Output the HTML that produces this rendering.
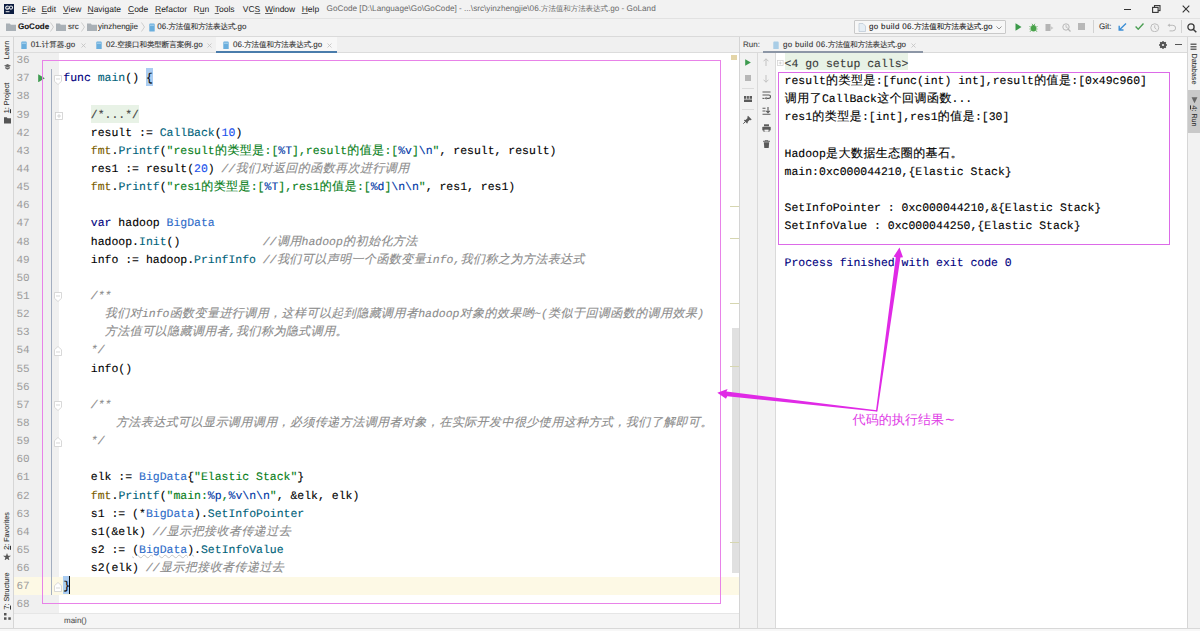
<!DOCTYPE html>
<html><head><meta charset="utf-8">
<style>
*{margin:0;padding:0;box-sizing:border-box}
html,body{text-rendering:geometricPrecision;width:1200px;height:631px;overflow:hidden;background:#f2f2f2;font-family:"Liberation Sans",sans-serif;position:relative}
.a{position:absolute}
i.k{position:relative;font-style:inherit;display:inline-block;width:12.45px;text-align:center;font-size:12px;line-height:1}
i.an{position:relative;font-style:normal;display:inline-block;width:13.1px;text-align:center;font-size:13px;line-height:1}
i.u{position:relative;font-style:normal;display:inline-block;width:7.45px;text-align:center;font-size:7.5px;line-height:1}
.menu{font-size:8.5px;color:#1e1e1e;top:3px;line-height:12px}
.menu u{text-decoration:underline;text-decoration-thickness:0.7px;text-decoration-color:#666;text-underline-offset:1.2px}
.ui{font-size:8px;line-height:12px;color:#333;-webkit-text-stroke:0.1px currentColor}
/* editor */
#ed{left:14px;top:53px;width:725px;height:560px;background:#fff;overflow:hidden}
#gut{left:0;top:0;width:44.5px;height:560px;background:#f0f0f0}
#nums{left:0;top:0;width:15.6px}
.nm{position:absolute;right:0;height:18.14px;line-height:18.14px;font-family:"Liberation Mono",monospace;font-size:11px;color:#9c9c9c;text-align:right;padding-right:0}
#code{left:49.3px;top:0;width:680px}
.ln{position:absolute;left:0;height:18.14px;line-height:18.14px;font-family:"Liberation Mono",monospace;font-size:11.47px;white-space:pre;color:#000;-webkit-text-stroke:0.12px currentColor}
.kw{color:#000080}
.fnd{color:#00627a}
.fn{color:#00627a}
.pk{color:#7a5d00}
.ty{color:#2d6bc9}
.tyw{color:#2d6bc9}
.wv{text-decoration:underline wavy #c4c4c4;text-decoration-thickness:0.8px;text-underline-offset:1px}
.st{color:#067d17}
.es{color:#0037a6}
.nu{color:#1750eb}
.cm{color:#8c8c8c;font-style:italic}
.fold{background:#e8f2e6;color:#444;padding:4px 0 1px}
.br{background:#abcdf2;padding:4px 0 1px}
.cur{background:#abcdf2;padding:4px 0 1px}
/* console */
#con{left:784.6px;top:55px;width:400px}
#con .ln{font-size:11.47px}
.cg{color:#3a3a3a;background:#e8f2e6;padding:4.5px 0 0.4px}
.co{color:#000}
.pf{color:#000080}
html:not(.hascjk) i.k,html:not(.hascjk) i.u,html:not(.hascjk) i.an{-webkit-text-fill-color:transparent;-webkit-text-stroke:0}
html:not(.hascjk) i.k::before{content:"";position:absolute;left:0;top:-1.9px;width:12.45px;height:14.00px}
html:not(.hascjk) i.k.g0::before{background:linear-gradient(currentColor,currentColor) 1.72px 1.00px/9.00px 1.00px no-repeat,linear-gradient(currentColor,currentColor) 1.72px 10.00px/9.00px 1.00px no-repeat,linear-gradient(currentColor,currentColor) 1.72px 1.00px/1.00px 10.00px no-repeat,linear-gradient(currentColor,currentColor) 9.72px 1.00px/1.00px 10.00px no-repeat,linear-gradient(currentColor,currentColor) 1.72px 5.50px/8.00px 1.00px no-repeat}
html:not(.hascjk) i.k.g1::before{background:linear-gradient(currentColor,currentColor) 3.22px 0.50px/1.00px 10.50px no-repeat,linear-gradient(currentColor,currentColor) 0.72px 4.00px/3.00px 1.00px no-repeat,linear-gradient(currentColor,currentColor) 5.22px 1.50px/6.00px 1.00px no-repeat,linear-gradient(currentColor,currentColor) 5.22px 1.50px/1.00px 9.00px no-repeat,linear-gradient(currentColor,currentColor) 10.22px 1.50px/1.00px 9.00px no-repeat,linear-gradient(currentColor,currentColor) 5.22px 6.00px/5.00px 1.00px no-repeat,linear-gradient(currentColor,currentColor) 5.22px 10.00px/6.00px 1.00px no-repeat}
html:not(.hascjk) i.k.g2::before{background:linear-gradient(currentColor,currentColor) 2.72px 1.00px/7.00px 1.00px no-repeat,linear-gradient(currentColor,currentColor) 2.72px 1.00px/1.00px 4.00px no-repeat,linear-gradient(currentColor,currentColor) 9.72px 1.00px/1.00px 4.00px no-repeat,linear-gradient(currentColor,currentColor) 2.72px 3.00px/7.00px 1.00px no-repeat,linear-gradient(currentColor,currentColor) 2.72px 5.00px/7.00px 1.00px no-repeat,linear-gradient(currentColor,currentColor) 0.72px 7.00px/11.00px 1.00px no-repeat,linear-gradient(currentColor,currentColor) 6.22px 7.00px/1.00px 4.00px no-repeat,linear-gradient(currentColor,currentColor) 6.22px 9.00px/4.00px 1.00px no-repeat,linear-gradient(currentColor,currentColor) 1.22px 10.50px/10.00px 1.00px no-repeat}
html:not(.hascjk) i.k.g3::before{background:linear-gradient(currentColor,currentColor) 5.72px 0.00px/1.00px 2.00px no-repeat,linear-gradient(currentColor,currentColor) 0.72px 2.50px/11.00px 1.00px no-repeat,linear-gradient(currentColor,currentColor) 4.22px 3.00px/1.00px 7.50px no-repeat,linear-gradient(currentColor,currentColor) 4.22px 5.50px/6.00px 1.00px no-repeat,linear-gradient(currentColor,currentColor) 9.72px 5.50px/1.00px 5.00px no-repeat,linear-gradient(currentColor,currentColor) 1.72px 10.00px/3.00px 1.00px no-repeat}
html:not(.hascjk) i.k.g4::before{background:linear-gradient(currentColor,currentColor) 1.22px 1.50px/3.00px 1.00px no-repeat,linear-gradient(currentColor,currentColor) 2.22px 4.00px/1.00px 6.00px no-repeat,linear-gradient(currentColor,currentColor) 1.22px 10.00px/3.00px 1.00px no-repeat,linear-gradient(currentColor,currentColor) 5.22px 1.00px/6.00px 1.00px no-repeat,linear-gradient(currentColor,currentColor) 5.22px 4.00px/6.00px 1.00px no-repeat,linear-gradient(currentColor,currentColor) 8.22px 1.00px/1.00px 10.00px no-repeat,linear-gradient(currentColor,currentColor) 5.22px 7.00px/6.00px 1.00px no-repeat}
html:not(.hascjk) i.k.g5::before{background:linear-gradient(currentColor,currentColor) 1.22px 1.50px/2.00px 1.00px no-repeat,linear-gradient(currentColor,currentColor) 1.22px 4.50px/2.00px 1.00px no-repeat,linear-gradient(currentColor,currentColor) 1.72px 7.00px/1.00px 3.00px no-repeat,linear-gradient(currentColor,currentColor) 4.72px 1.50px/6.50px 1.00px no-repeat,linear-gradient(currentColor,currentColor) 7.72px 1.50px/1.00px 9.00px no-repeat,linear-gradient(currentColor,currentColor) 4.72px 5.50px/6.50px 1.00px no-repeat,linear-gradient(currentColor,currentColor) 4.22px 10.00px/7.00px 1.00px no-repeat}
html:not(.hascjk) i.k.g6::before{background:linear-gradient(currentColor,currentColor) 0.72px 3.00px/11.00px 1.00px no-repeat,linear-gradient(currentColor,currentColor) 6.22px 0.50px/1.00px 10.50px no-repeat,linear-gradient(currentColor,currentColor) 2.22px 7.00px/3.00px 1.00px no-repeat,linear-gradient(currentColor,currentColor) 7.22px 7.00px/3.00px 1.00px no-repeat,linear-gradient(currentColor,currentColor) 3.22px 10.00px/6.00px 1.00px no-repeat}
html:not(.hascjk) i.k.g7::before{background:linear-gradient(currentColor,currentColor) 2.22px 1.00px/8.00px 1.00px no-repeat,linear-gradient(currentColor,currentColor) 2.22px 3.00px/8.00px 1.00px no-repeat,linear-gradient(currentColor,currentColor) 0.72px 5.00px/11.00px 1.00px no-repeat,linear-gradient(currentColor,currentColor) 2.22px 7.00px/8.00px 1.00px no-repeat,linear-gradient(currentColor,currentColor) 2.22px 9.00px/8.00px 1.00px no-repeat,linear-gradient(currentColor,currentColor) 6.22px 5.00px/1.00px 6.00px no-repeat,linear-gradient(currentColor,currentColor) 0.72px 10.50px/11.00px 1.00px no-repeat}
html:not(.hascjk) i.k.p0::before{background:linear-gradient(currentColor,currentColor) 2.22px 8.50px/1.00px 2.50px no-repeat}
html:not(.hascjk) i.k.p1::before{background:radial-gradient(circle at 3.22px 9.50px,transparent 0.90px,currentColor 1.10px,currentColor 1.90px,transparent 2.10px)}
html:not(.hascjk) i.k.p2::before{background:none}
html:not(.hascjk) i.u::before{content:"";position:absolute;left:0;top:0.0px;width:7.45px;height:9.20px}
html:not(.hascjk) i.u.g0::before{background:linear-gradient(currentColor,currentColor) 1.03px 0.60px/5.40px 0.80px no-repeat,linear-gradient(currentColor,currentColor) 1.03px 6.00px/5.40px 0.80px no-repeat,linear-gradient(currentColor,currentColor) 1.03px 0.60px/0.80px 6.00px no-repeat,linear-gradient(currentColor,currentColor) 5.83px 0.60px/0.80px 6.00px no-repeat,linear-gradient(currentColor,currentColor) 1.03px 3.30px/4.80px 0.80px no-repeat}
html:not(.hascjk) i.u.g1::before{background:linear-gradient(currentColor,currentColor) 1.93px 0.30px/0.80px 6.30px no-repeat,linear-gradient(currentColor,currentColor) 0.43px 2.40px/1.80px 0.80px no-repeat,linear-gradient(currentColor,currentColor) 3.13px 0.90px/3.60px 0.80px no-repeat,linear-gradient(currentColor,currentColor) 3.13px 0.90px/0.80px 5.40px no-repeat,linear-gradient(currentColor,currentColor) 6.12px 0.90px/0.80px 5.40px no-repeat,linear-gradient(currentColor,currentColor) 3.13px 3.60px/3.00px 0.80px no-repeat,linear-gradient(currentColor,currentColor) 3.13px 6.00px/3.60px 0.80px no-repeat}
html:not(.hascjk) i.u.g2::before{background:linear-gradient(currentColor,currentColor) 1.63px 0.60px/4.20px 0.80px no-repeat,linear-gradient(currentColor,currentColor) 1.63px 0.60px/0.80px 2.40px no-repeat,linear-gradient(currentColor,currentColor) 5.83px 0.60px/0.80px 2.40px no-repeat,linear-gradient(currentColor,currentColor) 1.63px 1.80px/4.20px 0.80px no-repeat,linear-gradient(currentColor,currentColor) 1.63px 3.00px/4.20px 0.80px no-repeat,linear-gradient(currentColor,currentColor) 0.43px 4.20px/6.60px 0.80px no-repeat,linear-gradient(currentColor,currentColor) 3.73px 4.20px/0.80px 2.40px no-repeat,linear-gradient(currentColor,currentColor) 3.73px 5.40px/2.40px 0.80px no-repeat,linear-gradient(currentColor,currentColor) 0.73px 6.30px/6.00px 0.80px no-repeat}
html:not(.hascjk) i.u.g3::before{background:linear-gradient(currentColor,currentColor) 3.43px 0.00px/0.80px 1.20px no-repeat,linear-gradient(currentColor,currentColor) 0.43px 1.50px/6.60px 0.80px no-repeat,linear-gradient(currentColor,currentColor) 2.53px 1.80px/0.80px 4.50px no-repeat,linear-gradient(currentColor,currentColor) 2.53px 3.30px/3.60px 0.80px no-repeat,linear-gradient(currentColor,currentColor) 5.83px 3.30px/0.80px 3.00px no-repeat,linear-gradient(currentColor,currentColor) 1.03px 6.00px/1.80px 0.80px no-repeat}
html:not(.hascjk) i.u.g4::before{background:linear-gradient(currentColor,currentColor) 0.73px 0.90px/1.80px 0.80px no-repeat,linear-gradient(currentColor,currentColor) 1.33px 2.40px/0.80px 3.60px no-repeat,linear-gradient(currentColor,currentColor) 0.73px 6.00px/1.80px 0.80px no-repeat,linear-gradient(currentColor,currentColor) 3.13px 0.60px/3.60px 0.80px no-repeat,linear-gradient(currentColor,currentColor) 3.13px 2.40px/3.60px 0.80px no-repeat,linear-gradient(currentColor,currentColor) 4.93px 0.60px/0.80px 6.00px no-repeat,linear-gradient(currentColor,currentColor) 3.13px 4.20px/3.60px 0.80px no-repeat}
html:not(.hascjk) i.u.g5::before{background:linear-gradient(currentColor,currentColor) 0.73px 0.90px/1.20px 0.80px no-repeat,linear-gradient(currentColor,currentColor) 0.73px 2.70px/1.20px 0.80px no-repeat,linear-gradient(currentColor,currentColor) 1.03px 4.20px/0.80px 1.80px no-repeat,linear-gradient(currentColor,currentColor) 2.83px 0.90px/3.90px 0.80px no-repeat,linear-gradient(currentColor,currentColor) 4.62px 0.90px/0.80px 5.40px no-repeat,linear-gradient(currentColor,currentColor) 2.83px 3.30px/3.90px 0.80px no-repeat,linear-gradient(currentColor,currentColor) 2.53px 6.00px/4.20px 0.80px no-repeat}
html:not(.hascjk) i.u.g6::before{background:linear-gradient(currentColor,currentColor) 0.43px 1.80px/6.60px 0.80px no-repeat,linear-gradient(currentColor,currentColor) 3.73px 0.30px/0.80px 6.30px no-repeat,linear-gradient(currentColor,currentColor) 1.33px 4.20px/1.80px 0.80px no-repeat,linear-gradient(currentColor,currentColor) 4.33px 4.20px/1.80px 0.80px no-repeat,linear-gradient(currentColor,currentColor) 1.93px 6.00px/3.60px 0.80px no-repeat}
html:not(.hascjk) i.u.g7::before{background:linear-gradient(currentColor,currentColor) 1.33px 0.60px/4.80px 0.80px no-repeat,linear-gradient(currentColor,currentColor) 1.33px 1.80px/4.80px 0.80px no-repeat,linear-gradient(currentColor,currentColor) 0.43px 3.00px/6.60px 0.80px no-repeat,linear-gradient(currentColor,currentColor) 1.33px 4.20px/4.80px 0.80px no-repeat,linear-gradient(currentColor,currentColor) 1.33px 5.40px/4.80px 0.80px no-repeat,linear-gradient(currentColor,currentColor) 3.73px 3.00px/0.80px 3.60px no-repeat,linear-gradient(currentColor,currentColor) 0.43px 6.30px/6.60px 0.80px no-repeat}
html:not(.hascjk) i.u.p0::before{background:linear-gradient(currentColor,currentColor) 1.33px 5.10px/0.80px 1.50px no-repeat}
html:not(.hascjk) i.u.p1::before{background:radial-gradient(circle at 1.93px 5.70px,transparent 0.26px,currentColor 0.46px,currentColor 1.26px,transparent 1.46px)}
html:not(.hascjk) i.u.p2::before{background:none}
html:not(.hascjk) i.an::before{content:"";position:absolute;left:0;top:-1.2px;width:13.1px;height:14.60px}
html:not(.hascjk) i.an.g0::before{background:linear-gradient(currentColor,currentColor) 1.82px 1.05px/9.45px 1.00px no-repeat,linear-gradient(currentColor,currentColor) 1.82px 10.50px/9.45px 1.00px no-repeat,linear-gradient(currentColor,currentColor) 1.82px 1.05px/1.00px 10.50px no-repeat,linear-gradient(currentColor,currentColor) 10.22px 1.05px/1.00px 10.50px no-repeat,linear-gradient(currentColor,currentColor) 1.82px 5.78px/8.40px 1.00px no-repeat}
html:not(.hascjk) i.an.g1::before{background:linear-gradient(currentColor,currentColor) 3.40px 0.53px/1.00px 11.03px no-repeat,linear-gradient(currentColor,currentColor) 0.77px 4.20px/3.15px 1.00px no-repeat,linear-gradient(currentColor,currentColor) 5.50px 1.58px/6.30px 1.00px no-repeat,linear-gradient(currentColor,currentColor) 5.50px 1.58px/1.00px 9.45px no-repeat,linear-gradient(currentColor,currentColor) 10.75px 1.58px/1.00px 9.45px no-repeat,linear-gradient(currentColor,currentColor) 5.50px 6.30px/5.25px 1.00px no-repeat,linear-gradient(currentColor,currentColor) 5.50px 10.50px/6.30px 1.00px no-repeat}
html:not(.hascjk) i.an.g2::before{background:linear-gradient(currentColor,currentColor) 2.87px 1.05px/7.35px 1.00px no-repeat,linear-gradient(currentColor,currentColor) 2.87px 1.05px/1.00px 4.20px no-repeat,linear-gradient(currentColor,currentColor) 10.22px 1.05px/1.00px 4.20px no-repeat,linear-gradient(currentColor,currentColor) 2.87px 3.15px/7.35px 1.00px no-repeat,linear-gradient(currentColor,currentColor) 2.87px 5.25px/7.35px 1.00px no-repeat,linear-gradient(currentColor,currentColor) 0.77px 7.35px/11.55px 1.00px no-repeat,linear-gradient(currentColor,currentColor) 6.55px 7.35px/1.00px 4.20px no-repeat,linear-gradient(currentColor,currentColor) 6.55px 9.45px/4.20px 1.00px no-repeat,linear-gradient(currentColor,currentColor) 1.30px 11.03px/10.50px 1.00px no-repeat}
html:not(.hascjk) i.an.g3::before{background:linear-gradient(currentColor,currentColor) 6.02px 0.00px/1.00px 2.10px no-repeat,linear-gradient(currentColor,currentColor) 0.77px 2.62px/11.55px 1.00px no-repeat,linear-gradient(currentColor,currentColor) 4.45px 3.15px/1.00px 7.88px no-repeat,linear-gradient(currentColor,currentColor) 4.45px 5.78px/6.30px 1.00px no-repeat,linear-gradient(currentColor,currentColor) 10.22px 5.78px/1.00px 5.25px no-repeat,linear-gradient(currentColor,currentColor) 1.82px 10.50px/3.15px 1.00px no-repeat}
html:not(.hascjk) i.an.g4::before{background:linear-gradient(currentColor,currentColor) 1.30px 1.58px/3.15px 1.00px no-repeat,linear-gradient(currentColor,currentColor) 2.35px 4.20px/1.00px 6.30px no-repeat,linear-gradient(currentColor,currentColor) 1.30px 10.50px/3.15px 1.00px no-repeat,linear-gradient(currentColor,currentColor) 5.50px 1.05px/6.30px 1.00px no-repeat,linear-gradient(currentColor,currentColor) 5.50px 4.20px/6.30px 1.00px no-repeat,linear-gradient(currentColor,currentColor) 8.65px 1.05px/1.00px 10.50px no-repeat,linear-gradient(currentColor,currentColor) 5.50px 7.35px/6.30px 1.00px no-repeat}
html:not(.hascjk) i.an.g5::before{background:linear-gradient(currentColor,currentColor) 1.30px 1.58px/2.10px 1.00px no-repeat,linear-gradient(currentColor,currentColor) 1.30px 4.73px/2.10px 1.00px no-repeat,linear-gradient(currentColor,currentColor) 1.82px 7.35px/1.00px 3.15px no-repeat,linear-gradient(currentColor,currentColor) 4.97px 1.58px/6.83px 1.00px no-repeat,linear-gradient(currentColor,currentColor) 8.12px 1.58px/1.00px 9.45px no-repeat,linear-gradient(currentColor,currentColor) 4.97px 5.78px/6.83px 1.00px no-repeat,linear-gradient(currentColor,currentColor) 4.45px 10.50px/7.35px 1.00px no-repeat}
html:not(.hascjk) i.an.g6::before{background:linear-gradient(currentColor,currentColor) 0.77px 3.15px/11.55px 1.00px no-repeat,linear-gradient(currentColor,currentColor) 6.55px 0.53px/1.00px 11.03px no-repeat,linear-gradient(currentColor,currentColor) 2.35px 7.35px/3.15px 1.00px no-repeat,linear-gradient(currentColor,currentColor) 7.60px 7.35px/3.15px 1.00px no-repeat,linear-gradient(currentColor,currentColor) 3.40px 10.50px/6.30px 1.00px no-repeat}
html:not(.hascjk) i.an.g7::before{background:linear-gradient(currentColor,currentColor) 2.35px 1.05px/8.40px 1.00px no-repeat,linear-gradient(currentColor,currentColor) 2.35px 3.15px/8.40px 1.00px no-repeat,linear-gradient(currentColor,currentColor) 0.77px 5.25px/11.55px 1.00px no-repeat,linear-gradient(currentColor,currentColor) 2.35px 7.35px/8.40px 1.00px no-repeat,linear-gradient(currentColor,currentColor) 2.35px 9.45px/8.40px 1.00px no-repeat,linear-gradient(currentColor,currentColor) 6.55px 5.25px/1.00px 6.30px no-repeat,linear-gradient(currentColor,currentColor) 0.77px 11.03px/11.55px 1.00px no-repeat}
html:not(.hascjk) i.an.p0::before{background:linear-gradient(currentColor,currentColor) 2.35px 8.93px/1.00px 2.62px no-repeat}
html:not(.hascjk) i.an.p1::before{background:radial-gradient(circle at 3.40px 9.97px,transparent 0.98px,currentColor 1.18px,currentColor 1.98px,transparent 2.18px)}
html:not(.hascjk) i.an.p2::before{background:none}
html:not(.hascjk) .cm i.k::before{transform:skewX(-10deg)}
</style>
<script>
(function(){try{var c=document.createElement('canvas');c.width=40;c.height=24;var x=c.getContext('2d');
x.font='18px "Liberation Sans", sans-serif';
function d(s){x.clearRect(0,0,40,24);x.fillText(s,2,19);return Array.prototype.join.call(x.getImageData(0,0,40,24).data,'');}
if(d('\u6211')!==d('\u4eec')) document.documentElement.className='hascjk';}catch(e){}})();
</script></head><body>

<!-- menu bar -->
<div class="a" style="left:0;top:0;width:1200px;height:18.5px;background:#f2f2f2;border-bottom:1.5px solid #e2e2e2"></div>
<svg class="a" style="left:4px;top:3.8px" width="10.2" height="10" viewBox="0 0 10.2 10"><rect width="10.2" height="10" fill="#0c1c40"/><path d="M4.6 2.6A1.65 1.65 0 1 0 4.8 4.4H3.4" fill="none" stroke="#e8e8e8" stroke-width="1.1"/><circle cx="7" cy="3.6" r="1.6" fill="none" stroke="#e8e8e8" stroke-width="1.1"/><rect x="1.7" y="7.2" width="3.8" height="1" fill="#e8e8e8"/></svg>
<div class="a menu" style="left:22px"><u>F</u>ile</div>
<div class="a menu" style="left:41.4px"><u>E</u>dit</div>
<div class="a menu" style="left:63px"><u>V</u>iew</div>
<div class="a menu" style="left:87.5px"><u>N</u>avigate</div>
<div class="a menu" style="left:128px"><u>C</u>ode</div>
<div class="a menu" style="left:155px"><u>R</u>efactor</div>
<div class="a menu" style="left:193.5px">R<u>u</u>n</div>
<div class="a menu" style="left:214.7px"><u>T</u>ools</div>
<div class="a menu" style="left:242.8px">VC<u>S</u></div>
<div class="a menu" style="left:265px"><u>W</u>indow</div>
<div class="a menu" style="left:301.7px"><u>H</u>elp</div>
<div class="a menu" style="left:326.6px;color:#6a6a6a;font-size:8.2px">GoCode [D:\Language\Go\GoCode] - ...\src\yinzhengjie\06.<i class="u g7">方</i><i class="u g3">法</i><i class="u g4">值</i><i class="u g4">和</i><i class="u g7">方</i><i class="u g3">法</i><i class="u g0">表</i><i class="u g2">达</i><i class="u g1">式</i>.go - GoLand</div>
<div class="a" style="left:1124px;top:8.5px;width:6.5px;height:1.2px;background:#333"></div>
<svg class="a" style="left:1152px;top:5px" width="9" height="8" viewBox="0 0 9 8"><rect x="2.5" y="0.6" width="5.5" height="5" fill="none" stroke="#333" stroke-width="1.1"/><rect x="0.6" y="2.4" width="5.5" height="5" fill="#f2f2f2" stroke="#333" stroke-width="1.1"/></svg>
<svg class="a" style="left:1182px;top:5px" width="8" height="8" viewBox="0 0 8 8"><path d="M0.7 0.7L7.3 7.3M7.3 0.7L0.7 7.3" stroke="#333" stroke-width="1.1"/></svg>

<!-- nav bar -->
<div class="a" style="left:0;top:18.5px;width:1200px;height:18.5px;background:#f2f2f2;border-bottom:1.5px solid #dadada"></div>

<!-- breadcrumbs -->
<svg class="a" style="left:6px;top:22.5px" width="10" height="8" viewBox="0 0 10 8"><path d="M0 0.5h3.8l1 1.2H10V8H0z" fill="#a9b0b6"/></svg>
<div class="a ui" style="left:18px;top:20.5px;font-weight:bold;color:#111">GoCode</div>
<svg class="a" style="left:49.5px;top:22px" width="4" height="10" viewBox="0 0 4 10"><path d="M0.5 0.5L3.5 5L0.5 9.5" fill="none" stroke="#c4c4c4" stroke-width="0.8"/></svg>
<svg class="a" style="left:56px;top:22.5px" width="10" height="8" viewBox="0 0 10 8"><path d="M0 0.5h3.8l1 1.2H10V8H0z" fill="#a9b0b6"/></svg>
<div class="a ui" style="left:68px;top:20.5px">src</div>
<svg class="a" style="left:80.5px;top:22px" width="4" height="10" viewBox="0 0 4 10"><path d="M0.5 0.5L3.5 5L0.5 9.5" fill="none" stroke="#c4c4c4" stroke-width="0.8"/></svg>
<svg class="a" style="left:87px;top:22.5px" width="10" height="8" viewBox="0 0 10 8"><path d="M0 0.5h3.8l1 1.2H10V8H0z" fill="#a9b0b6"/></svg>
<div class="a ui" style="left:98px;top:20.5px">yinzhengjie</div>
<svg class="a" style="left:141px;top:22px" width="4" height="10" viewBox="0 0 4 10"><path d="M0.5 0.5L3.5 5L0.5 9.5" fill="none" stroke="#c4c4c4" stroke-width="0.8"/></svg>
<svg class="a" style="left:148.7px;top:23.0px" width="6" height="8.5" viewBox="0 0 6 8.5"><path d="M1.2 0.6h3.6a0.9 0.9 0 0 1 0.9 0.9V8a0.5 0.5 0 0 1-0.5 0.5H0.8A0.5 0.5 0 0 1 0.3 8V1.5a0.9 0.9 0 0 1 0.9-0.9z" fill="#6aaedd"/><circle cx="2" cy="2.2" r="0.6" fill="#e8f4fb"/><circle cx="4" cy="2.2" r="0.6" fill="#e8f4fb"/></svg>
<div class="a ui" style="left:157.3px;top:20.5px">06.<i class="u g7">方</i><i class="u g3">法</i><i class="u g4">值</i><i class="u g4">和</i><i class="u g7">方</i><i class="u g3">法</i><i class="u g0">表</i><i class="u g2">达</i><i class="u g1">式</i>.go</div>

<!-- run config combo -->
<div class="a" style="left:853.5px;top:20px;width:152.5px;height:14px;background:#f7f7f7;border:1px solid #c9c9c9;border-radius:1px"></div>
<svg class="a" style="left:858px;top:23px" width="8" height="9" viewBox="0 0 8 9"><path d="M1 0.5h4l2.5 2.5V8.5H1z" fill="#e6eef5" stroke="#b9c6d2" stroke-width="0.7"/></svg>
<div class="a ui" style="left:869px;top:21px;color:#222"><span style="letter-spacing:0.33px">go build 06.</span><i class="u g7">方</i><i class="u g3">法</i><i class="u g4">值</i><i class="u g4">和</i><i class="u g7">方</i><i class="u g3">法</i><i class="u g0">表</i><i class="u g2">达</i><i class="u g1">式</i>.go</div>
<svg class="a" style="left:995.5px;top:25.5px" width="6" height="4" viewBox="0 0 6 4"><path d="M0.5 0.5L3 3L5.5 0.5" fill="none" stroke="#777" stroke-width="0.8"/></svg>
<svg class="a" style="left:1015px;top:23px" width="7" height="8" viewBox="0 0 7 8"><path d="M0.5 0.3L6.5 4L0.5 7.7z" fill="#3c9a4a"/></svg>
<svg class="a" style="left:1029px;top:22.5px" width="9" height="9" viewBox="0 0 9 9"><ellipse cx="4.5" cy="5.2" rx="2.6" ry="3.2" fill="#49a34a"/><path d="M0.5 3.5l2 1M8.5 3.5l-2 1M0.5 6l2 0M8.5 6l-2 0M0.8 8.5l2-1.2M8.2 8.5l-2-1.2M3 0.8l1 1.3M6 0.8l-1 1.3" stroke="#49a34a" stroke-width="0.8"/></svg>
<svg class="a" style="left:1045px;top:22.5px" width="9" height="9" viewBox="0 0 9 9"><path d="M0.5 1h5v7h-5z" fill="#b5b5b5"/><path d="M5.5 3L8.5 5L5.5 7" fill="#c9c9c9"/></svg>
<svg class="a" style="left:1062px;top:22.5px" width="9" height="9" viewBox="0 0 9 9"><circle cx="4" cy="4" r="3.2" fill="none" stroke="#b8b8b8" stroke-width="1"/><path d="M4 2v2.3h1.6" stroke="#b8b8b8" stroke-width="0.8" fill="none"/><path d="M5.5 5.5L8.5 8.5" stroke="#b8b8b8" stroke-width="1.2"/></svg>
<div class="a" style="left:1078px;top:23px;width:7px;height:7px;background:#b8b8b8"></div>
<div class="a" style="left:1092.5px;top:20px;width:1px;height:13px;background:#d2d2d2"></div>
<div class="a ui" style="left:1099px;top:21px;color:#333">Git:</div>
<svg class="a" style="left:1118px;top:23px" width="9" height="8" viewBox="0 0 9 8"><path d="M8 0.6L1.5 6.8M1.2 2.8V7h4.3" fill="none" stroke="#3d8fd6" stroke-width="1.4"/></svg>
<svg class="a" style="left:1134.5px;top:23px" width="9" height="7" viewBox="0 0 9 7"><path d="M0.6 3.6L3.2 6.2L8.5 0.6" fill="none" stroke="#4a9e52" stroke-width="1.4"/></svg>
<svg class="a" style="left:1150px;top:22.5px" width="9.5" height="9.5" viewBox="0 0 10 10"><circle cx="5" cy="5" r="4.2" fill="none" stroke="#b9b9b9" stroke-width="1"/><path d="M5 2.5V5.2l1.8 1.4" stroke="#b9b9b9" stroke-width="0.9" fill="none"/></svg>
<svg class="a" style="left:1167px;top:22.5px" width="9" height="9" viewBox="0 0 9 9"><path d="M2 2.3h3.8a2.8 2.8 0 0 1 0 5.6H2.5" fill="none" stroke="#b9b9b9" stroke-width="1"/><path d="M0.5 2.3L2.8 0.5V4.1z" fill="#b9b9b9"/></svg>
<div class="a" style="left:1181px;top:20px;width:1px;height:13px;background:#d2d2d2"></div>
<svg class="a" style="left:1187px;top:22.5px" width="10" height="10" viewBox="0 0 10 10"><circle cx="4" cy="4" r="3.1" fill="none" stroke="#3a3a3a" stroke-width="1.3"/><path d="M6.2 6.2L9.3 9.3" stroke="#3a3a3a" stroke-width="1.5"/></svg>

<!-- left strip -->
<div class="a" style="left:0;top:37px;width:13.5px;height:591px;background:#f2f2f2;border-right:1px solid #d6d6d6"></div>
<!-- right strip -->
<div class="a" style="left:1187px;top:37px;width:13px;height:591px;background:#f2f2f2;border-left:1px solid #d6d6d6"></div>


<!-- left strip labels -->
<div class="a ui" style="left:-23px;top:44.3px;width:60px;height:12px;transform:rotate(-90deg);text-align:center;color:#333;font-size:7.2px;white-space:nowrap">Learn</div>
<svg class="a" style="left:3.5px;top:63.5px" width="7" height="6" viewBox="0 0 7 6"><path d="M3.5 0L7 1.8L3.5 3.6L0 1.8z" fill="#666"/><path d="M1.3 2.7v1.8L3.5 5.7L5.7 4.5V2.7L3.5 3.9z" fill="#666"/></svg>
<div class="a ui" style="left:-23px;top:91.5px;width:60px;height:12px;transform:rotate(-90deg);text-align:center;color:#333;font-size:7.2px;white-space:nowrap"><u>1</u>: Project</div>
<svg class="a" style="left:3.5px;top:117px" width="7" height="6.5" viewBox="0 0 7 6.5"><path d="M0 0.3h2.8l0.7 0.9H7V6.5H0z" fill="#555"/></svg>
<div class="a ui" style="left:-23px;top:524.6px;width:60px;height:12px;transform:rotate(-90deg);text-align:center;color:#333;font-size:7.2px;white-space:nowrap"><u>2</u>: Favorites</div>
<svg class="a" style="left:3px;top:552.5px" width="8" height="7.5" viewBox="0 0 8 7.5"><path d="M4 0L5 2.7L8 2.8L5.6 4.6L6.5 7.5L4 5.8L1.5 7.5L2.4 4.6L0 2.8L3 2.7z" fill="#555"/></svg>
<div class="a ui" style="left:-23px;top:584.8px;width:60px;height:12px;transform:rotate(-90deg);text-align:center;color:#333;font-size:7.2px;white-space:nowrap"><u>7</u>: Structure</div>
<svg class="a" style="left:3.5px;top:613px" width="7" height="7" viewBox="0 0 7 7"><rect x="0" y="0" width="2.5" height="2.5" fill="#555"/><rect x="0" y="4.3" width="2.5" height="2.5" fill="#555"/><rect x="4.3" y="4.3" width="2.5" height="2.5" fill="#555"/></svg>

<!-- right strip labels -->
<svg class="a" style="left:1190px;top:43px" width="7" height="7.5" viewBox="0 0 7 7.5"><path d="M0.5 1.2h6M0.5 3.7h6M0.5 6.2h6" stroke="#666" stroke-width="1.5"/></svg>
<div class="a ui" style="left:1164px;top:62.5px;width:60px;height:12px;transform:rotate(90deg);text-align:center;color:#333;font-size:7.2px;white-space:nowrap">Database</div>
<div class="a" style="left:1188px;top:90px;width:12px;height:42.5px;background:#c9c9c9"></div>
<svg class="a" style="left:1190.5px;top:97px" width="7" height="6.5" viewBox="0 0 7 6.5"><path d="M0.5 0.3L6.5 3.25L0.5 6.2z" transform="rotate(90 3.5 3.25)" fill="#666"/></svg>
<div class="a ui" style="left:1164px;top:109.9px;width:60px;height:12px;transform:rotate(90deg);text-align:center;color:#333;font-size:7.2px;white-space:nowrap"><u>4</u>: Run</div>

<!-- tab bar -->
<div class="a" style="left:14px;top:37px;width:725px;height:16px;background:#f0f0f0;border-bottom:1px solid #dcdcdc"></div>

<!-- tabs -->
<svg class="a" style="left:20.5px;top:40.5px" width="6" height="8.5" viewBox="0 0 6 8.5"><path d="M1.2 0.6h3.6a0.9 0.9 0 0 1 0.9 0.9V8a0.5 0.5 0 0 1-0.5 0.5H0.8A0.5 0.5 0 0 1 0.3 8V1.5a0.9 0.9 0 0 1 0.9-0.9z" fill="#6aaedd"/><circle cx="2" cy="2.2" r="0.6" fill="#e8f4fb"/><circle cx="4" cy="2.2" r="0.6" fill="#e8f4fb"/></svg>
<div class="a ui" style="left:30.7px;top:39.2px">01.<i class="u g7">计</i><i class="u g1">算</i><i class="u g0">器</i>.go</div>
<svg class="a" style="left:80.5px;top:42.5px" width="5" height="5" viewBox="0 0 5 5"><path d="M0.5 0.5L4.5 4.5M4.5 0.5L0.5 4.5" stroke="#c0c0c0" stroke-width="0.8"/></svg>
<svg class="a" style="left:95.8px;top:40.5px" width="6" height="8.5" viewBox="0 0 6 8.5"><path d="M1.2 0.6h3.6a0.9 0.9 0 0 1 0.9 0.9V8a0.5 0.5 0 0 1-0.5 0.5H0.8A0.5 0.5 0 0 1 0.3 8V1.5a0.9 0.9 0 0 1 0.9-0.9z" fill="#6aaedd"/><circle cx="2" cy="2.2" r="0.6" fill="#e8f4fb"/><circle cx="4" cy="2.2" r="0.6" fill="#e8f4fb"/></svg>
<div class="a ui" style="left:106px;top:39.2px">02.<i class="u g6">空</i><i class="u g3">接</i><i class="u g5">口</i><i class="u g4">和</i><i class="u g5">类</i><i class="u g5">型</i><i class="u g3">断</i><i class="u g0">言</i><i class="u g0">案</i><i class="u g5">例</i>.go</div>
<svg class="a" style="left:207px;top:42.5px" width="5" height="5" viewBox="0 0 5 5"><path d="M0.5 0.5L4.5 4.5M4.5 0.5L0.5 4.5" stroke="#c0c0c0" stroke-width="0.8"/></svg>
<div class="a" style="left:216px;top:37px;width:121px;height:15px;background:#f7f7f7"></div>
<div class="a" style="left:216px;top:51.3px;width:121px;height:2px;background:#4a7cab"></div>
<svg class="a" style="left:223.0px;top:40.5px" width="6" height="8.5" viewBox="0 0 6 8.5"><path d="M1.2 0.6h3.6a0.9 0.9 0 0 1 0.9 0.9V8a0.5 0.5 0 0 1-0.5 0.5H0.8A0.5 0.5 0 0 1 0.3 8V1.5a0.9 0.9 0 0 1 0.9-0.9z" fill="#6aaedd"/><circle cx="2" cy="2.2" r="0.6" fill="#e8f4fb"/><circle cx="4" cy="2.2" r="0.6" fill="#e8f4fb"/></svg>
<div class="a ui" style="left:233px;top:39.2px">06.<i class="u g7">方</i><i class="u g3">法</i><i class="u g4">值</i><i class="u g4">和</i><i class="u g7">方</i><i class="u g3">法</i><i class="u g0">表</i><i class="u g2">达</i><i class="u g1">式</i>.go</div>
<svg class="a" style="left:327px;top:42.5px" width="5" height="5" viewBox="0 0 5 5"><path d="M0.5 0.5L4.5 4.5M4.5 0.5L0.5 4.5" stroke="#c0c0c0" stroke-width="0.8"/></svg>


<!-- editor -->
<div id="ed" class="a">
  <div id="gut" class="a"></div>
  <div class="a" style="left:0;top:523.7px;width:725px;height:18.14px;background:#fdf9e5"></div>
  <div id="nums" class="a">
<div class="nm" style="top:-0.85px">36</div>
<div class="nm" style="top:17.29px">37</div>
<div class="nm" style="top:35.43px">38</div>
<div class="nm" style="top:53.57px">39</div>
<div class="nm" style="top:71.71px">42</div>
<div class="nm" style="top:89.85px">43</div>
<div class="nm" style="top:107.99px">44</div>
<div class="nm" style="top:126.13px">45</div>
<div class="nm" style="top:144.27px">46</div>
<div class="nm" style="top:162.41px">47</div>
<div class="nm" style="top:180.55px">48</div>
<div class="nm" style="top:198.69px">49</div>
<div class="nm" style="top:216.83px">50</div>
<div class="nm" style="top:234.97px">51</div>
<div class="nm" style="top:253.11px">52</div>
<div class="nm" style="top:271.25px">53</div>
<div class="nm" style="top:289.39px">54</div>
<div class="nm" style="top:307.53px">55</div>
<div class="nm" style="top:325.67px">56</div>
<div class="nm" style="top:343.81px">57</div>
<div class="nm" style="top:361.95px">58</div>
<div class="nm" style="top:380.09px">59</div>
<div class="nm" style="top:398.23px">60</div>
<div class="nm" style="top:416.37px">61</div>
<div class="nm" style="top:434.51px">62</div>
<div class="nm" style="top:452.65px">63</div>
<div class="nm" style="top:470.79px">64</div>
<div class="nm" style="top:488.93px">65</div>
<div class="nm" style="top:507.07px">66</div>
<div class="nm" style="top:525.21px">67</div>
<div class="nm" style="top:543.35px">68</div>
  </div>
  <div id="code" class="a">
<div class="ln" style="top:-0.85px"></div>
<div class="ln" style="top:17.29px"><span class="kw">func</span><span class="n"> </span><span class="fnd">main</span><span class="n">() </span><span class="br">{</span></div>
<div class="ln" style="top:35.43px"></div>
<div class="ln" style="top:53.57px"><span class="n">    </span><span class="fold">/*...*/</span></div>
<div class="ln" style="top:71.71px"><span class="n">    result := </span><span class="fn">CallBack</span><span class="n">(</span><span class="nu">10</span><span class="n">)</span></div>
<div class="ln" style="top:89.85px"><span class="n">    </span><span class="pk">fmt</span><span class="n">.</span><span class="fn">Printf</span><span class="n">(</span><span class="st">&quot;result<i class="k g4">的</i><i class="k g5">类</i><i class="k g5">型</i><i class="k g1">是</i>:[</span><span class="es">%T</span><span class="st">],result<i class="k g4">的</i><i class="k g4">值</i><i class="k g1">是</i>:[</span><span class="es">%v</span><span class="st">]</span><span class="es">\n</span><span class="st">&quot;</span><span class="n">, result, result)</span></div>
<div class="ln" style="top:107.99px"><span class="n">    res1 := result(</span><span class="nu">20</span><span class="n">) </span><span class="cm">//<i class="k g7">我</i><i class="k g4">们</i><i class="k g7">对</i><i class="k g4">返</i><i class="k g2">回</i><i class="k g4">的</i><i class="k g3">函</i><i class="k g0">数</i><i class="k g3">再</i><i class="k g7">次</i><i class="k g5">进</i><i class="k g4">行</i><i class="k g5">调</i><i class="k g0">用</i></span></div>
<div class="ln" style="top:126.13px"><span class="n">    </span><span class="pk">fmt</span><span class="n">.</span><span class="fn">Printf</span><span class="n">(</span><span class="st">&quot;res1<i class="k g4">的</i><i class="k g5">类</i><i class="k g5">型</i><i class="k g1">是</i>:[</span><span class="es">%T</span><span class="st">],res1<i class="k g4">的</i><i class="k g4">值</i><i class="k g1">是</i>:[</span><span class="es">%d</span><span class="st">]</span><span class="es">\n\n</span><span class="st">&quot;</span><span class="n">, res1, res1)</span></div>
<div class="ln" style="top:144.27px"></div>
<div class="ln" style="top:162.41px"><span class="n">    </span><span class="kw">var</span><span class="n"> hadoop </span><span class="ty">BigData</span></div>
<div class="ln" style="top:180.55px"><span class="n">    hadoop.</span><span class="fn">Init</span><span class="n">()            </span><span class="cm">//<i class="k g5">调</i><i class="k g0">用</i>hadoop<i class="k g4">的</i><i class="k g3">初</i><i class="k g5">始</i><i class="k g2">化</i><i class="k g7">方</i><i class="k g3">法</i></span></div>
<div class="ln" style="top:198.69px"><span class="n">    info := hadoop.</span><span class="fn">PrinfInfo</span><span class="n"> </span><span class="cm">//<i class="k g7">我</i><i class="k g4">们</i><i class="k g1">可</i><i class="k g3">以</i><i class="k g0">声</i><i class="k g2">明</i><i class="k g0">一</i><i class="k g6">个</i><i class="k g3">函</i><i class="k g0">数</i><i class="k g0">变</i><i class="k g1">量</i>info,<i class="k g7">我</i><i class="k g4">们</i><i class="k g0">称</i><i class="k g5">之</i><i class="k g6">为</i><i class="k g7">方</i><i class="k g3">法</i><i class="k g0">表</i><i class="k g2">达</i><i class="k g1">式</i></span></div>
<div class="ln" style="top:216.83px"></div>
<div class="ln" style="top:234.97px"><span class="n">    </span><span class="cm">/**</span></div>
<div class="ln" style="top:253.11px"><span class="n">    </span><span class="cm">  <i class="k g7">我</i><i class="k g4">们</i><i class="k g7">对</i>info<i class="k g3">函</i><i class="k g0">数</i><i class="k g0">变</i><i class="k g1">量</i><i class="k g5">进</i><i class="k g4">行</i><i class="k g5">调</i><i class="k g0">用</i><i class="k p0">，</i><i class="k g7">这</i><i class="k g1">样</i><i class="k g1">可</i><i class="k g3">以</i><i class="k g1">起</i><i class="k g0">到</i><i class="k g0">隐</i><i class="k g1">藏</i><i class="k g5">调</i><i class="k g0">用</i><i class="k g3">者</i>hadoop<i class="k g7">对</i><i class="k g7">象</i><i class="k g4">的</i><i class="k g0">效</i><i class="k g4">果</i><i class="k g1">哟</i>~(<i class="k g5">类</i><i class="k g4">似</i><i class="k g2">于</i><i class="k g2">回</i><i class="k g5">调</i><i class="k g3">函</i><i class="k g0">数</i><i class="k g4">的</i><i class="k g5">调</i><i class="k g0">用</i><i class="k g0">效</i><i class="k g4">果</i>)</span></div>
<div class="ln" style="top:271.25px"><span class="n">    </span><span class="cm">  <i class="k g7">方</i><i class="k g3">法</i><i class="k g4">值</i><i class="k g1">可</i><i class="k g3">以</i><i class="k g0">隐</i><i class="k g1">藏</i><i class="k g5">调</i><i class="k g0">用</i><i class="k g3">者</i>,<i class="k g7">我</i><i class="k g4">们</i><i class="k g0">称</i><i class="k g6">为</i><i class="k g0">隐</i><i class="k g1">式</i><i class="k g5">调</i><i class="k g0">用</i><i class="k p1">。</i></span></div>
<div class="ln" style="top:289.39px"><span class="n">    </span><span class="cm">*/</span></div>
<div class="ln" style="top:307.53px"><span class="n">    info()</span></div>
<div class="ln" style="top:325.67px"></div>
<div class="ln" style="top:343.81px"><span class="n">    </span><span class="cm">/**</span></div>
<div class="ln" style="top:361.95px"><span class="n">    </span><span class="cm"><i class="k p2">　</i><i class="k p2">　</i><i class="k g7">方</i><i class="k g3">法</i><i class="k g0">表</i><i class="k g2">达</i><i class="k g1">式</i><i class="k g1">可</i><i class="k g3">以</i><i class="k g2">显</i><i class="k g6">示</i><i class="k g5">调</i><i class="k g0">用</i><i class="k g5">调</i><i class="k g0">用</i><i class="k p0">，</i><i class="k g3">必</i><i class="k g5">须</i><i class="k g0">传</i><i class="k g6">递</i><i class="k g7">方</i><i class="k g3">法</i><i class="k g5">调</i><i class="k g0">用</i><i class="k g3">者</i><i class="k g7">对</i><i class="k g7">象</i><i class="k p0">，</i><i class="k g0">在</i><i class="k g2">实</i><i class="k g3">际</i><i class="k g0">开</i><i class="k g7">发</i><i class="k g3">中</i><i class="k g0">很</i><i class="k g7">少</i><i class="k g1">使</i><i class="k g0">用</i><i class="k g7">这</i><i class="k g3">种</i><i class="k g7">方</i><i class="k g1">式</i><i class="k p0">，</i><i class="k g7">我</i><i class="k g4">们</i><i class="k g2">了</i><i class="k g5">解</i><i class="k g5">即</i><i class="k g1">可</i><i class="k p1">。</i></span></div>
<div class="ln" style="top:380.09px"><span class="n">    </span><span class="cm">*/</span></div>
<div class="ln" style="top:398.23px"></div>
<div class="ln" style="top:416.37px"><span class="n">    elk := </span><span class="ty">BigData</span><span class="n">{</span><span class="st">&quot;Elastic Stack&quot;</span><span class="n">}</span></div>
<div class="ln" style="top:434.51px"><span class="n">    </span><span class="pk">fmt</span><span class="n">.</span><span class="fn">Printf</span><span class="n">(</span><span class="st">&quot;main:</span><span class="es">%p</span><span class="st">,</span><span class="es">%v\n\n</span><span class="st">&quot;</span><span class="n">, &amp;elk, elk)</span></div>
<div class="ln" style="top:452.65px"><span class="n">    s1 := (*</span><span class="ty">BigData</span><span class="n">).</span><span class="fn">SetInfoPointer</span></div>
<div class="ln" style="top:470.79px"><span class="n">    s1(&amp;elk) </span><span class="cm">//<i class="k g2">显</i><i class="k g6">示</i><i class="k g6">把</i><i class="k g3">接</i><i class="k g2">收</i><i class="k g3">者</i><i class="k g0">传</i><i class="k g6">递</i><i class="k g1">过</i><i class="k g5">去</i></span></div>
<div class="ln" style="top:488.93px"><span class="n">    s2 := </span><span class="wv">(<span class="tyw">BigData</span>)</span><span class="n">.</span><span class="fn">SetInfoValue</span></div>
<div class="ln" style="top:507.07px"><span class="n">    s2(elk) </span><span class="cm">//<i class="k g2">显</i><i class="k g6">示</i><i class="k g6">把</i><i class="k g3">接</i><i class="k g2">收</i><i class="k g3">者</i><i class="k g0">传</i><i class="k g6">递</i><i class="k g1">过</i><i class="k g5">去</i></span></div>
<div class="ln" style="top:525.21px"><span class="cur">}</span></div>
<div class="ln" style="top:543.35px"></div>
  </div>
</div>


<!-- gutter decorations -->
<svg class="a" style="left:37.5px;top:73.5px" width="7" height="8.5" viewBox="0 0 7 8.5"><path d="M0.2 0.2L6.8 4.25L0.2 8.3z" fill="#3d9a4f"/></svg>
<div class="a" style="left:51px;top:69px;width:1px;height:525.5px;background:#a3aec0"></div>
<svg class="a" style="left:54.3px;top:74.79px" width="8" height="10" viewBox="0 0 8 10"><path d="M0.5 0.5h7v5.8L4 9.5L0.5 6.3z" fill="#fff" stroke="#cfcfcf" stroke-width="0.8"/><path d="M2 4h4" stroke="#c4c4c4" stroke-width="0.7"/></svg><svg class="a" style="left:54.5px;top:111.77px" width="8" height="8" viewBox="0 0 8 8"><rect x="0.5" y="0.5" width="7" height="7" fill="#fff" stroke="#cfcfcf" stroke-width="0.8"/><path d="M4 2v4M2 4h4" stroke="#c4c4c4" stroke-width="0.7"/></svg><svg class="a" style="left:54.3px;top:292.47px" width="8" height="10" viewBox="0 0 8 10"><path d="M0.5 0.5h7v5.8L4 9.5L0.5 6.3z" fill="#fff" stroke="#cfcfcf" stroke-width="0.8"/><path d="M2 4h4" stroke="#c4c4c4" stroke-width="0.7"/></svg><svg class="a" style="left:54.3px;top:346.39px" width="8" height="10" viewBox="0 0 8 10"><path d="M0.5 9.5h7V3.7L4 0.5L0.5 3.7z" fill="#fff" stroke="#cfcfcf" stroke-width="0.8"/><path d="M2 6h4" stroke="#c4c4c4" stroke-width="0.7"/></svg><svg class="a" style="left:54.3px;top:401.31px" width="8" height="10" viewBox="0 0 8 10"><path d="M0.5 0.5h7v5.8L4 9.5L0.5 6.3z" fill="#fff" stroke="#cfcfcf" stroke-width="0.8"/><path d="M2 4h4" stroke="#c4c4c4" stroke-width="0.7"/></svg><svg class="a" style="left:54.3px;top:437.09px" width="8" height="10" viewBox="0 0 8 10"><path d="M0.5 9.5h7V3.7L4 0.5L0.5 3.7z" fill="#fff" stroke="#cfcfcf" stroke-width="0.8"/><path d="M2 6h4" stroke="#c4c4c4" stroke-width="0.7"/></svg><svg class="a" style="left:54.3px;top:582.21px" width="8" height="10" viewBox="0 0 8 10"><path d="M0.5 9.5h7V3.7L4 0.5L0.5 3.7z" fill="#fff" stroke="#cfcfcf" stroke-width="0.8"/><path d="M2 6h4" stroke="#c4c4c4" stroke-width="0.7"/></svg>

<!-- scrollbar & error stripes -->
<div class="a" style="left:731.3px;top:54.8px;width:5.7px;height:5.6px;background:#e4d5a8"></div>
<div class="a" style="left:732.2px;top:327.6px;width:6.5px;height:245px;background:#e0e0e0"></div>
<div class="a" style="left:730px;top:206px;width:9px;height:1.2px;background:#d6d6b0"></div>
<div class="a" style="left:730px;top:238px;width:9px;height:1.2px;background:#d6d6b0"></div>
<div class="a" style="left:730px;top:302.5px;width:9px;height:1.2px;background:#d6d6b0"></div>
<div class="a" style="left:730px;top:365.5px;width:9px;height:1.2px;background:#d6d6b0"></div>
<div class="a" style="left:730px;top:542px;width:9px;height:1.2px;background:#d6d6b0"></div>

<div class="a" style="left:68.6px;top:576.4px;width:1.4px;height:18px;background:#111"></div>
<!-- editor breadcrumb -->
<div class="a" style="left:14px;top:613px;width:725px;height:15px;background:#f5f5f5;border-top:1px solid #e6e6e6"></div>
<div class="a ui" style="left:64px;top:615px;color:#555">main()</div>

<!-- run panel -->
<div class="a" style="left:739px;top:37px;width:448px;height:591px;background:#fff;border-left:1px solid #d4d4d4"></div>
<div class="a" style="left:740px;top:37px;width:447px;height:15.5px;background:#f2f2f2;border-bottom:1px solid #dadada"></div>
<div class="a" style="left:740px;top:52.5px;width:17.5px;height:575.5px;background:#f2f2f2;border-right:1px solid #dadada"></div>
<div class="a" style="left:758px;top:52.5px;width:18px;height:575.5px;background:#f2f2f2;border-right:1px solid #dadada"></div>

<div class="a ui" style="left:743px;top:38.5px;color:#444">Run:</div>
<svg class="a" style="left:772.5px;top:40.5px" width="6" height="8.5" viewBox="0 0 6 8.5"><path d="M1.2 0.6h3.6a0.9 0.9 0 0 1 0.9 0.9V8a0.5 0.5 0 0 1-0.5 0.5H0.8A0.5 0.5 0 0 1 0.3 8V1.5a0.9 0.9 0 0 1 0.9-0.9z" fill="#a9cde6"/></svg>
<div class="a ui" style="left:783px;top:39.2px"><span style="letter-spacing:0.3px">go build 06.</span><i class="u g7">方</i><i class="u g3">法</i><i class="u g4">值</i><i class="u g4">和</i><i class="u g7">方</i><i class="u g3">法</i><i class="u g0">表</i><i class="u g2">达</i><i class="u g1">式</i>.go</div>
<svg class="a" style="left:911px;top:42.5px" width="5" height="5" viewBox="0 0 5 5"><path d="M0.5 0.5L4.5 4.5M4.5 0.5L0.5 4.5" stroke="#c0c0c0" stroke-width="0.8"/></svg>
<div class="a" style="left:763px;top:51.2px;width:159.5px;height:1.4px;background:#8c96a6"></div>
<svg class="a" style="left:1158.5px;top:40.5px" width="8" height="8" viewBox="0 0 8 8"><circle cx="4" cy="4" r="2.4" fill="none" stroke="#555" stroke-width="1.6"/><path d="M4 0v8M0 4h8M1.2 1.2l5.6 5.6M6.8 1.2l-5.6 5.6" stroke="#555" stroke-width="1.3"/><circle cx="4" cy="4" r="1.1" fill="#f2f2f2"/></svg>
<div class="a" style="left:1175px;top:43.8px;width:7px;height:1.2px;background:#555"></div>

<!-- run toolbar -->
<svg class="a" style="left:745.3px;top:58.7px" width="6" height="7" viewBox="0 0 6 7"><path d="M0.2 0.2L5.9 3.5L0.2 6.8z" fill="#3d9a4f"/></svg>
<div class="a" style="left:745.2px;top:75px;width:5.8px;height:5.8px;background:#b6b6b6"></div>
<div class="a" style="left:742px;top:88.3px;width:12px;height:1px;background:#dcdcdc"></div>
<svg class="a" style="left:744px;top:95.5px" width="8" height="6.5" viewBox="0 0 8 6.5"><rect x="0" y="0" width="8" height="6.5" fill="#5a5a5a"/><path d="M0 3.2h8M2.6 0v3.2M5.3 0v3.2" stroke="#f2f2f2" stroke-width="0.7"/></svg>
<div class="a" style="left:742px;top:109px;width:12px;height:1px;background:#dcdcdc"></div>
<svg class="a" style="left:743px;top:115px" width="9.5" height="9" viewBox="0 0 9.5 9"><path d="M5 0.8L8.7 4.5L7.7 5.3L6.6 5L4.6 7L4.8 8L4 8.6L0.9 5.5L1.6 4.8L2.6 5L4.6 3L4.3 2z" fill="#5a5a5a"/><path d="M2.5 6.5L0.3 8.7" stroke="#5a5a5a" stroke-width="1"/></svg>
<svg class="a" style="left:763px;top:58px" width="6" height="8" viewBox="0 0 6 8"><path d="M3 0.8V8M0.5 3.3L3 0.8L5.5 3.3" fill="none" stroke="#c2c2c2" stroke-width="1"/></svg>
<svg class="a" style="left:763px;top:74.5px" width="6" height="8" viewBox="0 0 6 8"><path d="M3 0V7.2M0.5 4.7L3 7.2L5.5 4.7" fill="none" stroke="#c2c2c2" stroke-width="1"/></svg>
<svg class="a" style="left:762px;top:91px" width="9" height="8.5" viewBox="0 0 9 8.5"><path d="M0.5 1h8M0.5 4h6.3a1.6 1.6 0 0 1 0 3.4H4.5" fill="none" stroke="#5a5a5a" stroke-width="1.1"/><path d="M4.5 5.8v3l-1.8-1.5z" fill="#5a5a5a"/><path d="M0.5 7.4h2" stroke="#5a5a5a" stroke-width="1.1"/></svg>
<svg class="a" style="left:762px;top:107px" width="9" height="8" viewBox="0 0 9 8"><path d="M0.5 1.2h3M0.5 4h3M0.5 7.3h8M6 0v5.5M4.2 3.8L6 5.7L7.8 3.8" fill="none" stroke="#5a5a5a" stroke-width="1.1"/></svg>
<svg class="a" style="left:762px;top:123.5px" width="9" height="8.5" viewBox="0 0 9 8.5"><rect x="2" y="0.3" width="5" height="2" fill="#5a5a5a"/><rect x="0.3" y="2.8" width="8.4" height="3.6" rx="0.6" fill="#5a5a5a"/><rect x="2" y="5.2" width="5" height="3" fill="#f2f2f2" stroke="#5a5a5a" stroke-width="0.8"/></svg>
<svg class="a" style="left:763px;top:139.5px" width="7" height="8" viewBox="0 0 7 8"><path d="M0 1.3h7M2.3 1.3V0.3h2.4v1" stroke="#5a5a5a" stroke-width="0.9" fill="none"/><path d="M0.8 2.3h5.4l-0.5 5.6H1.3z" fill="#5a5a5a"/></svg>
<svg class="a" style="left:777px;top:60.3px" width="6.5" height="6" viewBox="0 0 6.5 6"><rect x="0.4" y="0.4" width="5.7" height="5.2" fill="#fff" stroke="#cfcfcf" stroke-width="0.7"/><path d="M3.25 1.5v3M1.75 3h3" stroke="#bdbdbd" stroke-width="0.6"/></svg>

<div id="con" class="a">
<div class="ln" style="top:0.00px"><span class="cg">&lt;4 go setup calls&gt;</span></div><div class="ln" style="top:18.14px"><span class="co">result<i class="k g4">的</i><i class="k g5">类</i><i class="k g5">型</i><i class="k g1">是</i>:[func(int) int],result<i class="k g4">的</i><i class="k g4">值</i><i class="k g1">是</i>:[0x49c960]</span></div><div class="ln" style="top:36.28px"><span class="co"><i class="k g5">调</i><i class="k g0">用</i><i class="k g2">了</i>CallBack<i class="k g7">这</i><i class="k g6">个</i><i class="k g2">回</i><i class="k g5">调</i><i class="k g3">函</i><i class="k g0">数</i>...</span></div><div class="ln" style="top:54.42px"><span class="co">res1<i class="k g4">的</i><i class="k g5">类</i><i class="k g5">型</i><i class="k g1">是</i>:[int],res1<i class="k g4">的</i><i class="k g4">值</i><i class="k g1">是</i>:[30]</span></div><div class="ln" style="top:72.56px"></div><div class="ln" style="top:90.70px"><span class="co">Hadoop<i class="k g1">是</i><i class="k g1">大</i><i class="k g0">数</i><i class="k g2">据</i><i class="k g1">生</i><i class="k g7">态</i><i class="k g0">圈</i><i class="k g4">的</i><i class="k g6">基</i><i class="k g5">石</i><i class="k p1">。</i></span></div><div class="ln" style="top:108.84px"><span class="co">main:0xc000044210,{Elastic Stack}</span></div><div class="ln" style="top:126.98px"></div><div class="ln" style="top:145.12px"><span class="co">SetInfoPointer : 0xc000044210,&amp;{Elastic Stack}</span></div><div class="ln" style="top:163.26px"><span class="co">SetInfoValue : 0xc000044250,{Elastic Stack}</span></div><div class="ln" style="top:181.40px"></div><div class="ln" style="top:199.54px"><span class="pf">Process finished with exit code 0</span></div>
</div>

<!-- bottom -->
<div class="a" style="left:0;top:628px;width:1200px;height:3px;background:#f7f7f7;border-top:1px solid #d8d8d8"></div>


<!-- annotations -->
<div class="a" style="left:42px;top:59.8px;width:679px;height:544.5px;border:1.6px solid #e882e8"></div>
<div class="a" style="left:777.8px;top:71.7px;width:392.4px;height:173.2px;border:1.5px solid #dc6ae8"></div>
<svg class="a" style="left:0;top:0" width="1200" height="631" viewBox="0 0 1200 631">
 <path d="M717.3 392.8L727.6 389L726.4 391.5L876.8 410.3L876.5 411.5L727.2 396.3L726 398.7Z" fill="#e02ae6"/>
 <path d="M899.5 247.4L903 257.3L900.4 257.6L877.4 411.6L875.9 411.6L895.8 257.2L893.6 256.6Z" fill="#e02ae6"/>
</svg>
<div class="a" style="left:852.5px;top:410.5px;font-size:13px;line-height:18px;color:#e040e6;white-space:nowrap"><i class="an g5">代</i><i class="an g7">码</i><i class="an g4">的</i><i class="an g1">执</i><i class="an g4">行</i><i class="an g5">结</i><i class="an g4">果</i><span style="font-size:16px;vertical-align:-1px;margin-left:1px">~</span></div>

</body></html>
